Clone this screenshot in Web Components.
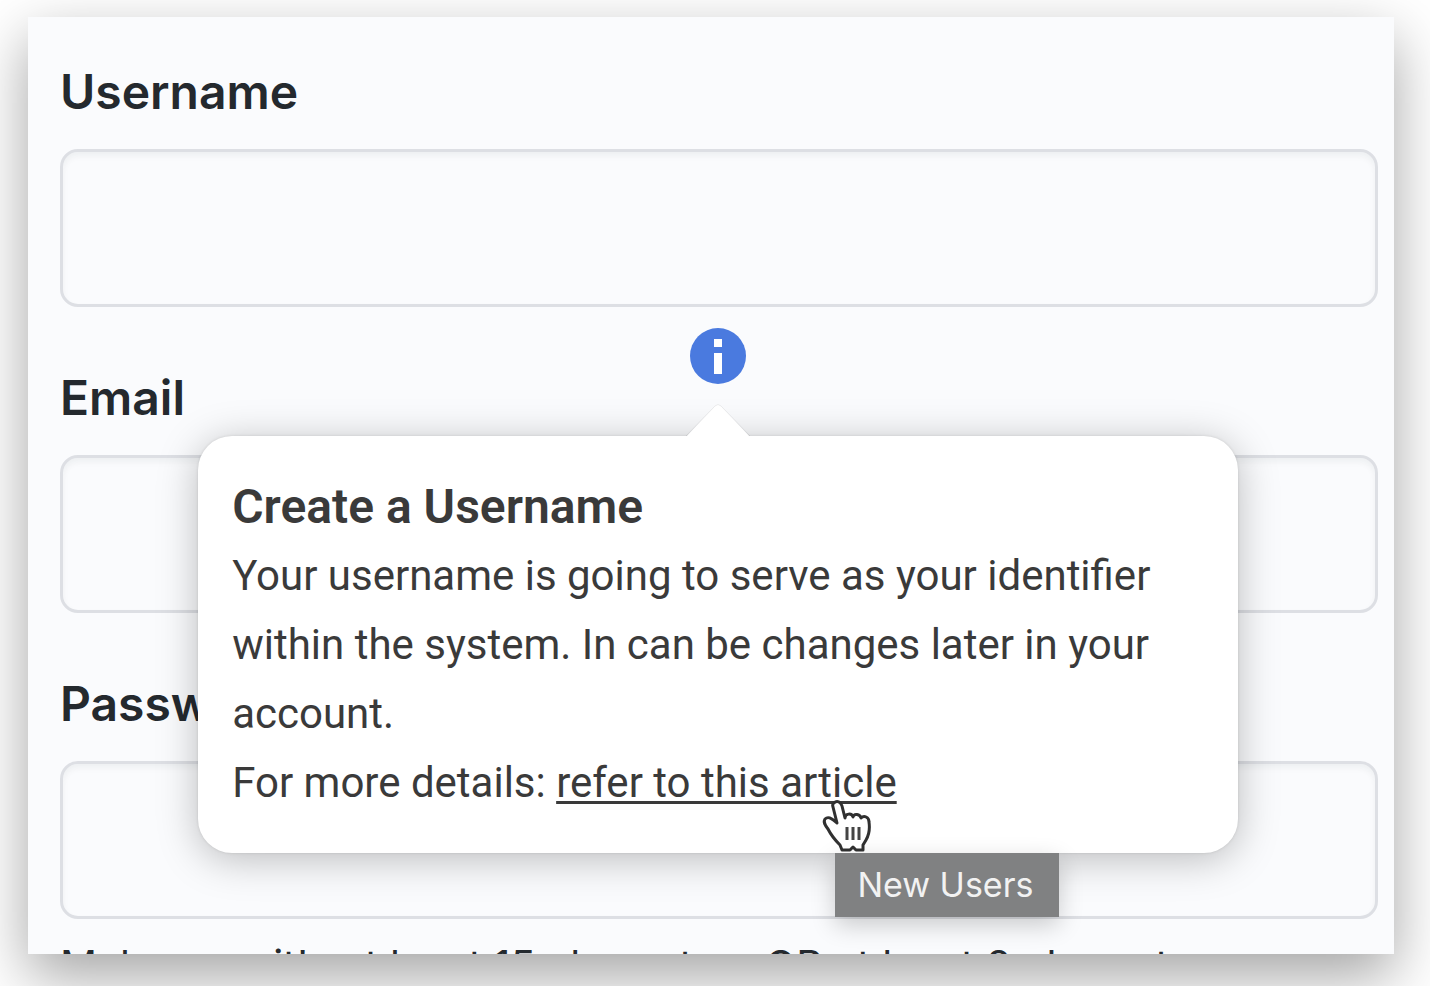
<!DOCTYPE html>
<html lang="en">
<head>
<meta charset="utf-8">
<meta name="viewport" content="width=device-width, initial-scale=1">
<title>Sign up</title>
<style>
  * { box-sizing: border-box; }

  body {
    margin: 0;
    height: 100vh;
    padding: 17px 36px 32px 28px;
    background: #fff;
    overflow: hidden;
    font-family: Inter, "Liberation Sans", sans-serif;
    color: #24292e;
  }
</style>
</head>
<body>
  <signup-card>
    <form-field label="Username" name="username">
      <info-popover heading="Create a Username">
        Your username is going to serve as your identifier within the system.
        In can be changes later in your account.<br>
        For more details: <hint-link href="#new-users" tip="New Users">refer to this article</hint-link>
      </info-popover>
    </form-field>
    <form-field label="Email" name="email" type="email"></form-field>
    <form-field label="Password" name="password" type="password"></form-field>
    <span slot="note">Make sure it's at least 15 characters OR at least 8 characters</span>
  </signup-card>

<script>
// Panel that holds the form, content past its bottom edge is cut off
class SignupCard extends HTMLElement {
  constructor() {
    super();
    this.attachShadow({ mode: 'open' });
    this.shadowRoot.innerHTML = `
      <style>
        :host {
          display: block;
          height: 100%;
          background: #fafbfd;
          box-shadow: 0 22px 56px rgba(0, 0, 0, 0.36);
        }

        form {
          display: flex;
          flex-direction: column;
          gap: 60px;
          height: 100%;
          box-sizing: border-box;
          padding: 44px 16px 0 32px;
          overflow: hidden;
        }

        .note {
          margin: -38px 0 0;
          flex: none;
          font-size: 41px;
          line-height: 48px;
          white-space: nowrap;
        }
      </style>
      <form>
        <slot></slot>
        <p class="note"><slot name="note"></slot></p>
      </form>
    `;
  }
}

// Label + text box, the default slot is for a hint hung under the box
class FormField extends HTMLElement {
  constructor() {
    super();
    this.attachShadow({ mode: 'open' });
  }

  connectedCallback() {
    const label = this.getAttribute('label');
    const name = this.getAttribute('name');
    const type = this.getAttribute('type') || 'text';

    this.shadowRoot.innerHTML = `
      <style>
        :host {
          display: flex;
          flex-direction: column;
          flex: none;
          gap: 26px;
          position: relative;
        }

        label {
          font-size: 48px;
          font-weight: 600;
          line-height: 62px;
        }

        input {
          width: 100%;
          height: 158px;
          box-sizing: border-box;
          padding: 0 32px;
          border: 3px solid #dddfe4;
          border-radius: 18px;
          background: #fafbfd;
          box-shadow: inset 0 4px 6px rgba(27, 31, 35, 0.05);
          color: inherit;
          font: inherit;
          font-size: 42px;
          outline: none;
        }
      </style>
      <label for="${name}">${label}</label>
      <input id="${name}" name="${name}" type="${type}">
      <slot></slot>
    `;
  }
}

// Info icon with its open bubble
class InfoPopover extends HTMLElement {
  constructor() {
    super();
    this.attachShadow({ mode: 'open' });
  }

  connectedCallback() {
    this.shadowRoot.innerHTML = `
      <style>
        :host {
          display: flex;
          flex-direction: column;
          align-items: center;
          position: absolute;
          z-index: 1;
          top: 100%;
          left: 0;
          right: 2px;
          padding-top: 21px;
          font-family: Roboto, "Liberation Sans", sans-serif;
          color: #3a3a3a;
        }

        button {
          display: block;
          width: 56px;
          height: 56px;
          padding: 0;
          border: 0;
          border-radius: 50%;
          background: none;
        }

        svg { display: block; }

        .bubble {
          position: relative;
          width: 79%;
          box-sizing: border-box;
          margin-top: 52px;
          padding: 36px 34px;
          border-radius: 34px;
          background: #fff;
          box-shadow: 0 6px 40px rgba(0, 0, 0, 0.26), 0 0 3px rgba(0, 0, 0, 0.12);
          font-size: 42px;
          line-height: 69px;
        }

        .arrow {
          position: absolute;
          bottom: 100%;
          left: 50%;
          margin: 0 0 -1px -32px;
        }

        h2 {
          margin: 0;
          font-size: 48px;
          font-weight: 600;
          line-height: 69px;
        }

        p { margin: 0; }
      </style>
      <button type="button" aria-label="More information">
        <svg width="56" height="56" viewBox="0 0 56 56" aria-hidden="true">
          <circle cx="28" cy="28" r="28" fill="#4a7adf"/>
          <path d="M24 11h8v8h-8zM24 25h8v21h-8z" fill="#fff"/>
        </svg>
      </button>
      <div class="bubble" role="dialog" aria-labelledby="heading">
        <svg class="arrow" width="64" height="33" viewBox="0 0 64 33" aria-hidden="true">
          <path d="M0 33 29 2q3-3 6 0L64 33z" fill="#fff"/>
          <path d="M0 32 29 2q3-3 6 0L64 32" fill="none" stroke="#000" stroke-opacity="0.07"/>
        </svg>
        <h2 id="heading">${this.getAttribute('heading')}</h2>
        <p><slot></slot></p>
      </div>
    `;
  }
}

// Link in hovered state: hand pointer and title tip
class HintLink extends HTMLElement {
  constructor() {
    super();
    this.attachShadow({ mode: 'open' });
  }

  connectedCallback() {
    this.shadowRoot.innerHTML = `
      <style>
        :host {
          display: inline-block;
          position: relative;
        }

        a {
          color: inherit;
          text-decoration: underline;
          text-decoration-thickness: 3px;
          text-underline-offset: 4px;
          text-decoration-skip-ink: none;
        }

        .pointer {
          position: absolute;
          z-index: 1;
          top: 52px;
          left: 78%;
        }

        .tip {
          position: absolute;
          top: 105px;
          left: 82%;
          padding: 0 26px 0 22px;
          background: #808182;
          box-shadow: 0 8px 24px rgba(0, 0, 0, 0.2);
          color: #f2f2f2;
          font-family: Inter, "Liberation Sans", sans-serif;
          font-size: 34px;
          line-height: 64px;
          white-space: nowrap;
        }
      </style>
      <a href="${this.getAttribute('href')}" aria-describedby="tip"><slot></slot></a>
      <svg class="pointer" width="50" height="52" viewBox="0 0 50 52" aria-hidden="true">
        <path d="M12 3c3-3 7-1 8 3l3 12c0-5 7-5 8-1 1-4 7-3 8 1 3-3 8-1 8 4 1 7 0 13-3 18l-3 5v5h-7l-3-3-3 3h-8l-2-5C13 40 9 35 6 29c-3-4-5-7-3-10 3-3 7-1 12 4L11 7Q10 4 12 3z" fill="#fff" stroke="#303030" stroke-width="3" stroke-linejoin="round"/>
        <path d="M25 27v13M31 27v13M37 27v13" fill="none" stroke="#444" stroke-width="3"/>
      </svg>
      <span class="tip" id="tip" role="tooltip">${this.getAttribute('tip')}</span>
    `;
  }
}

customElements.define('signup-card', SignupCard);
customElements.define('form-field', FormField);
customElements.define('info-popover', InfoPopover);
customElements.define('hint-link', HintLink);
</script>
</body>
</html>
